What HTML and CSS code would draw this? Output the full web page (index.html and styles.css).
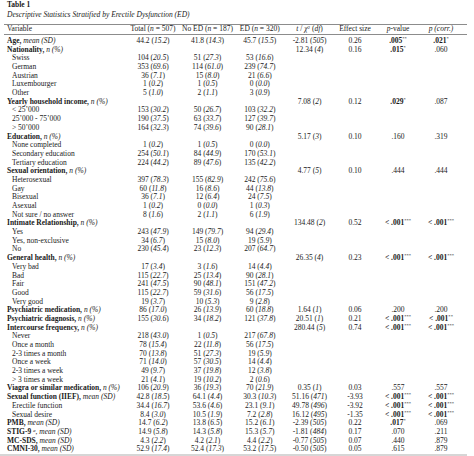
FILE: index.html
```html
<!DOCTYPE html>
<html>
<head>
<meta charset="utf-8">
<title>Table 1</title>
<link rel="stylesheet" href="styles.css">
</head>
<body>
<div class="page">
  <div class="title">Table 1</div>
  <div class="subtitle">Descriptive Statistics Stratified by Erectile Dysfunction (ED)</div>
  <table class="stats">
    <colgroup>
      <col class="c-var"><col class="c-total"><col class="c-noed"><col class="c-ed"><col class="c-t"><col class="c-eff"><col class="c-p"><col class="c-pc">
    </colgroup>
    <thead>
      <tr>
        <th class="lbl">Variable</th>
        <th>Total (<i>n</i> = 507)</th>
        <th>No ED (<i>n</i> = 187)</th>
        <th>ED (<i>n</i> = 320)</th>
        <th><i>t</i> / <i>χ</i><sup class="sq">2</sup> (<i>df</i>)</th>
        <th>Effect size</th>
        <th><i>p</i>-value</th>
        <th class="last"><i>p (corr.)</i></th>
      </tr>
    </thead>
    <tbody>
      <tr><td class="lbl"><b>Age,</b> <i>mean (SD)</i></td><td>44.2 (<i>15.2</i>)</td><td>41.8 (<i>14.3</i>)</td><td>45.7 (<i>15.5</i>)</td><td>-2.81 (<i>505</i>)</td><td>0.26</td><td><b>.005</b><sup>**</sup></td><td class="last"><b>.021</b><sup>*</sup></td></tr>
      <tr><td class="lbl"><b>Nationality,</b> <i>n (%)</i></td><td></td><td></td><td></td><td>12.34 (<i>4</i>)</td><td>0.16</td><td><b>.015</b><sup>*</sup></td><td class="last">.060</td></tr>
      <tr><td class="lbl sub">Swiss</td><td>104 (<i>20.5</i>)</td><td>51 (<i>27.3</i>)</td><td>53 (<i>16.6</i>)</td><td></td><td></td><td></td><td class="last"></td></tr>
      <tr><td class="lbl sub">German</td><td>353 (<i>69.6</i>)</td><td>114 (<i>61.0</i>)</td><td>239 (<i>74.7</i>)</td><td></td><td></td><td></td><td class="last"></td></tr>
      <tr><td class="lbl sub">Austrian</td><td>36 (<i>7.1</i>)</td><td>15 (<i>8.0</i>)</td><td>21 (<i>6.6</i>)</td><td></td><td></td><td></td><td class="last"></td></tr>
      <tr><td class="lbl sub">Luxembourger</td><td>1 (<i>0.2</i>)</td><td>1 (<i>0.5</i>)</td><td>0 (<i>0.0</i>)</td><td></td><td></td><td></td><td class="last"></td></tr>
      <tr><td class="lbl sub">Other</td><td>5 (<i>1.0</i>)</td><td>2 (<i>1.1</i>)</td><td>3 (<i>0.9</i>)</td><td></td><td></td><td></td><td class="last"></td></tr>
      <tr><td class="lbl"><b>Yearly household income,</b> <i>n (%)</i></td><td></td><td></td><td></td><td>7.08 (<i>2</i>)</td><td>0.12</td><td><b>.029</b><sup>*</sup></td><td class="last">.087</td></tr>
      <tr><td class="lbl sub">&lt; 25’000</td><td>153 (<i>30.2</i>)</td><td>50 (<i>26.7</i>)</td><td>103 (<i>32.2</i>)</td><td></td><td></td><td></td><td class="last"></td></tr>
      <tr><td class="lbl sub">25’000 - 75’000</td><td>190 (<i>37.5</i>)</td><td>63 (<i>33.7</i>)</td><td>127 (<i>39.7</i>)</td><td></td><td></td><td></td><td class="last"></td></tr>
      <tr><td class="lbl sub">&gt; 50’000</td><td>164 (<i>32.3</i>)</td><td>74 (<i>39.6</i>)</td><td>90 (<i>28.1</i>)</td><td></td><td></td><td></td><td class="last"></td></tr>
      <tr><td class="lbl"><b>Education,</b> <i>n (%)</i></td><td></td><td></td><td></td><td>5.17 (<i>3</i>)</td><td>0.10</td><td>.160</td><td class="last">.319</td></tr>
      <tr><td class="lbl sub">None completed</td><td>1 (<i>0.2</i>)</td><td>1 (<i>0.5</i>)</td><td>0 (<i>0.0</i>)</td><td></td><td></td><td></td><td class="last"></td></tr>
      <tr><td class="lbl sub">Secondary education</td><td>254 (<i>50.1</i>)</td><td>84 (<i>44.9</i>)</td><td>170 (<i>53.1</i>)</td><td></td><td></td><td></td><td class="last"></td></tr>
      <tr><td class="lbl sub">Tertiary education</td><td>224 (<i>44.2</i>)</td><td>89 (<i>47.6</i>)</td><td>135 (<i>42.2</i>)</td><td></td><td></td><td></td><td class="last"></td></tr>
      <tr><td class="lbl"><b>Sexual orientation,</b> <i>n (%)</i></td><td></td><td></td><td></td><td>4.77 (<i>5</i>)</td><td>0.10</td><td>.444</td><td class="last">.444</td></tr>
      <tr><td class="lbl sub">Heterosexual</td><td>397 (<i>78.3</i>)</td><td>155 (<i>82.9</i>)</td><td>242 (<i>75.6</i>)</td><td></td><td></td><td></td><td class="last"></td></tr>
      <tr><td class="lbl sub">Gay</td><td>60 (<i>11.8</i>)</td><td>16 (<i>8.6</i>)</td><td>44 (<i>13.8</i>)</td><td></td><td></td><td></td><td class="last"></td></tr>
      <tr><td class="lbl sub">Bisexual</td><td>36 (<i>7.1</i>)</td><td>12 (<i>6.4</i>)</td><td>24 (<i>7.5</i>)</td><td></td><td></td><td></td><td class="last"></td></tr>
      <tr><td class="lbl sub">Asexual</td><td>1 (<i>0.2</i>)</td><td>0 (<i>0.0</i>)</td><td>1 (<i>0.3</i>)</td><td></td><td></td><td></td><td class="last"></td></tr>
      <tr><td class="lbl sub">Not sure / no answer</td><td>8 (<i>1.6</i>)</td><td>2 (<i>1.1</i>)</td><td>6 (<i>1.9</i>)</td><td></td><td></td><td></td><td class="last"></td></tr>
      <tr><td class="lbl"><b>Intimate Relationship,</b> <i>n (%)</i></td><td></td><td></td><td></td><td>134.48 (<i>2</i>)</td><td>0.52</td><td><b>&lt; .001</b><sup>***</sup></td><td class="last"><b>&lt; .001</b><sup>***</sup></td></tr>
      <tr><td class="lbl sub">Yes</td><td>243 (<i>47.9</i>)</td><td>149 (<i>79.7</i>)</td><td>94 (<i>29.4</i>)</td><td></td><td></td><td></td><td class="last"></td></tr>
      <tr><td class="lbl sub">Yes, non-exclusive</td><td>34 (<i>6.7</i>)</td><td>15 (<i>8.0</i>)</td><td>19 (<i>5.9</i>)</td><td></td><td></td><td></td><td class="last"></td></tr>
      <tr><td class="lbl sub">No</td><td>230 (<i>45.4</i>)</td><td>23 (<i>12.3</i>)</td><td>207 (<i>64.7</i>)</td><td></td><td></td><td></td><td class="last"></td></tr>
      <tr><td class="lbl"><b>General health,</b> <i>n (%)</i></td><td></td><td></td><td></td><td>26.35 (<i>4</i>)</td><td>0.23</td><td><b>&lt; .001</b><sup>***</sup></td><td class="last"><b>&lt; .001</b><sup>***</sup></td></tr>
      <tr><td class="lbl sub">Very bad</td><td>17 (<i>3.4</i>)</td><td>3 (<i>1.6</i>)</td><td>14 (<i>4.4</i>)</td><td></td><td></td><td></td><td class="last"></td></tr>
      <tr><td class="lbl sub">Bad</td><td>115 (<i>22.7</i>)</td><td>25 (<i>13.4</i>)</td><td>90 (<i>28.1</i>)</td><td></td><td></td><td></td><td class="last"></td></tr>
      <tr><td class="lbl sub">Fair</td><td>241 (<i>47.5</i>)</td><td>90 (<i>48.1</i>)</td><td>151 (<i>47.2</i>)</td><td></td><td></td><td></td><td class="last"></td></tr>
      <tr><td class="lbl sub">Good</td><td>115 (<i>22.7</i>)</td><td>59 (<i>31.6</i>)</td><td>56 (<i>17.5</i>)</td><td></td><td></td><td></td><td class="last"></td></tr>
      <tr><td class="lbl sub">Very good</td><td>19 (<i>3.7</i>)</td><td>10 (<i>5.3</i>)</td><td>9 (<i>2.8</i>)</td><td></td><td></td><td></td><td class="last"></td></tr>
      <tr><td class="lbl"><b>Psychiatric medication,</b> <i>n (%)</i></td><td>86 (<i>17.0</i>)</td><td>26 (<i>13.9</i>)</td><td>60 (<i>18.8</i>)</td><td>1.64 (<i>1</i>)</td><td>0.06</td><td>.200</td><td class="last">.200</td></tr>
      <tr><td class="lbl"><b>Psychiatric diagnosis,</b> <i>n (%)</i></td><td>155 (<i>30.6</i>)</td><td>34 (<i>18.2</i>)</td><td>121 (<i>37.8</i>)</td><td>20.51 (<i>1</i>)</td><td>0.21</td><td><b>&lt; .001</b><sup>***</sup></td><td class="last"><b>&lt; .001</b><sup>**</sup></td></tr>
      <tr><td class="lbl"><b>Intercourse frequency,</b> <i>n (%)</i></td><td></td><td></td><td></td><td>280.44 (<i>5</i>)</td><td>0.74</td><td><b>&lt; .001</b><sup>***</sup></td><td class="last"><b>&lt; .001</b><sup>***</sup></td></tr>
      <tr><td class="lbl sub">Never</td><td>218 (<i>43.0</i>)</td><td>1 (<i>0.5</i>)</td><td>217 (<i>67.8</i>)</td><td></td><td></td><td></td><td class="last"></td></tr>
      <tr><td class="lbl sub">Once a month</td><td>78 (<i>15.4</i>)</td><td>22 (<i>11.8</i>)</td><td>56 (<i>17.5</i>)</td><td></td><td></td><td></td><td class="last"></td></tr>
      <tr><td class="lbl sub">2-3 times a month</td><td>70 (<i>13.8</i>)</td><td>51 (<i>27.3</i>)</td><td>19 (<i>5.9</i>)</td><td></td><td></td><td></td><td class="last"></td></tr>
      <tr><td class="lbl sub">Once a week</td><td>71 (<i>14.0</i>)</td><td>57 (<i>30.5</i>)</td><td>14 (<i>4.4</i>)</td><td></td><td></td><td></td><td class="last"></td></tr>
      <tr><td class="lbl sub">2-3 times a week</td><td>49 (<i>9.7</i>)</td><td>37 (<i>19.8</i>)</td><td>12 (<i>3.8</i>)</td><td></td><td></td><td></td><td class="last"></td></tr>
      <tr><td class="lbl sub">&gt; 3 times a week</td><td>21 (<i>4.1</i>)</td><td>19 (<i>10.2</i>)</td><td>2 (<i>0.6</i>)</td><td></td><td></td><td></td><td class="last"></td></tr>
      <tr><td class="lbl"><b>Viagra or similar medication,</b> <i>n (%)</i></td><td>106 (<i>20.9</i>)</td><td>36 (<i>19.3</i>)</td><td>70 (<i>21.9</i>)</td><td>0.35 (<i>1</i>)</td><td>0.03</td><td>.557</td><td class="last">.557</td></tr>
      <tr><td class="lbl"><b>Sexual function (IIEF),</b> <i>mean (SD)</i></td><td>42.8 (<i>18.5</i>)</td><td>64.1 (<i>4.4</i>)</td><td>30.3 (<i>10.3</i>)</td><td>51.16 (<i>471</i>)</td><td>-3.93</td><td><b>&lt; .001</b><sup>***</sup></td><td class="last"><b>&lt; .001</b><sup>***</sup></td></tr>
      <tr><td class="lbl sub">Erectile function</td><td>34.4 (<i>16.7</i>)</td><td>53.6 (<i>4.6</i>)</td><td>23.1 (<i>9.1</i>)</td><td>49.78 (<i>496</i>)</td><td>-3.92</td><td><b>&lt; .001</b><sup>***</sup></td><td class="last"><b>&lt; .001</b><sup>***</sup></td></tr>
      <tr><td class="lbl sub">Sexual desire</td><td>8.4 (<i>3.0</i>)</td><td>10.5 (<i>1.9</i>)</td><td>7.2 (<i>2.8</i>)</td><td>16.12 (<i>495</i>)</td><td>-1.35</td><td><b>&lt; .001</b><sup>***</sup></td><td class="last"><b>&lt; .001</b><sup>***</sup></td></tr>
      <tr><td class="lbl"><b>PMB,</b> <i>mean (SD)</i></td><td>14.7 (<i>6.2</i>)</td><td>13.8 (<i>6.5</i>)</td><td>15.2 (<i>6.1</i>)</td><td>-2.39 (<i>505</i>)</td><td>0.22</td><td><b>.017</b><sup>*</sup></td><td class="last">.069</td></tr>
      <tr><td class="lbl"><b>STIG-9</b> <sup class="note">a</sup>, <i>mean (SD)</i></td><td>14.9 (<i>5.8</i>)</td><td>14.3 (<i>5.8</i>)</td><td>15.3 (<i>5.7</i>)</td><td>-1.81 (<i>484</i>)</td><td>0.17</td><td>.070</td><td class="last">.211</td></tr>
      <tr><td class="lbl"><b>MC-SDS,</b> <i>mean (SD)</i></td><td>4.3 (<i>2.2</i>)</td><td>4.2 (<i>2.1</i>)</td><td>4.4 (<i>2.2</i>)</td><td>-0.77 (<i>505</i>)</td><td>0.07</td><td>.440</td><td class="last">.879</td></tr>
      <tr><td class="lbl"><b>CMNI-30,</b> <i>mean (SD)</i></td><td>52.9 (<i>17.4</i>)</td><td>52.4 (<i>17.3</i>)</td><td>53.2 (<i>17.5</i>)</td><td>-0.50 (<i>505</i>)</td><td>0.05</td><td>.615</td><td class="last">.879</td></tr>
    </tbody>
  </table>
  <div class="band"></div>
</div>
</body>
</html>
```

FILE: styles.css
```css
html, body {
  margin: 0;
  padding: 0;
  background: #ffffff;
}

body {
  font-family: "Liberation Serif", "Times New Roman", serif;
  font-size: 7.5px;
  color: #1a1a1a;
}

.page {
  padding: 1px 0 0 4px;
}

.title {
  font-weight: bold;
  line-height: 8.7px;
  padding-left: 3px;
}

.subtitle {
  font-style: italic;
  line-height: 8.7px;
  padding-left: 3px;
  margin-top: 1.1px;
  margin-bottom: 4.6px;
}

.stats {
  border-collapse: collapse;
  table-layout: fixed;
  width: 463px;
}

.c-var { width: 121px; }
.c-total { width: 56px; }
.c-noed { width: 53px; }
.c-ed { width: 51.5px; }
.c-t { width: 48px; }
.c-eff { width: 43px; }
.c-p { width: 43px; }
.c-pc { width: 47.5px; }

.stats th,
.stats td {
  padding: 0;
  line-height: 8.68px;
  white-space: nowrap;
  text-align: center;
  font-weight: normal;
  vertical-align: middle;
}

.stats thead th {
  border-top: 1px solid #8c8c8c;
  border-bottom: 1px solid #8c8c8c;
  padding: 0.2px 0 0.2px 0;
}

.stats tbody tr:first-child td {
  padding-top: 1.8px;
}

.stats .lbl {
  text-align: left;
  padding-left: 3px;
}

.stats .lbl.sub {
  padding-left: 8px;
}

.stats .last {
  padding-right: 4.5px;
}

.stats b {
  font-weight: bold;
}

.stats sup {
  font-size: 4.6px;
  line-height: 0;
  vertical-align: 2.6px;
}

.stats sup.sq {
  font-size: 5px;
  vertical-align: 2.4px;
}

.stats sup.note {
  font-style: italic;
  font-size: 5px;
  vertical-align: 2.4px;
}

.band {
  height: 12px;
  margin-left: -4px;
  margin-right: 7px;
  background: #d6d6d6;
}
```
